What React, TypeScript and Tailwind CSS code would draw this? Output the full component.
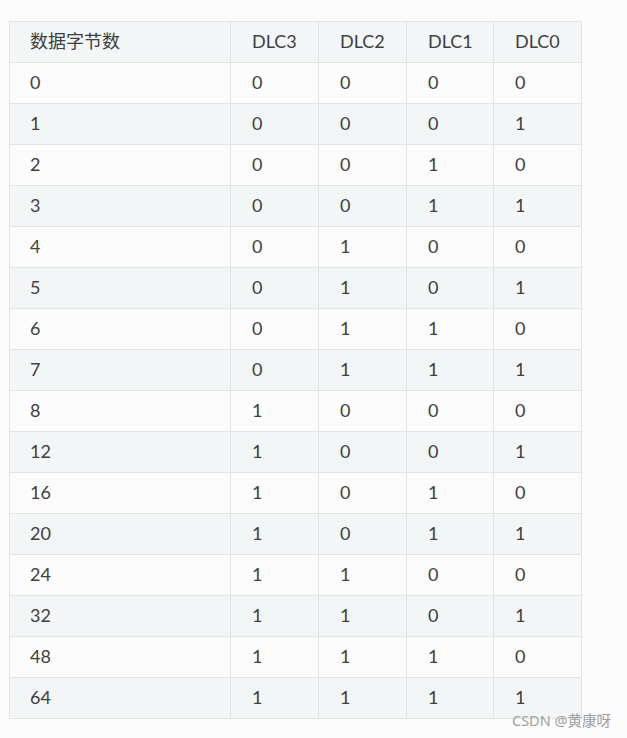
import React from "react";

const rows: [string, string, string, string, string][] = [
  ["0", "0", "0", "0", "0"],
  ["1", "0", "0", "0", "1"],
  ["2", "0", "0", "1", "0"],
  ["3", "0", "0", "1", "1"],
  ["4", "0", "1", "0", "0"],
  ["5", "0", "1", "0", "1"],
  ["6", "0", "1", "1", "0"],
  ["7", "0", "1", "1", "1"],
  ["8", "1", "0", "0", "0"],
  ["12", "1", "0", "0", "1"],
  ["16", "1", "0", "1", "0"],
  ["20", "1", "0", "1", "1"],
  ["24", "1", "1", "0", "0"],
  ["32", "1", "1", "0", "1"],
  ["48", "1", "1", "1", "0"],
  ["64", "1", "1", "1", "1"],
];

const widths = ["w-[221px]", "w-[88px]", "w-[88px]", "w-[87px]", "w-[88px]"];

export default function App() {
  return (
    <div className="relative w-[627px] h-[738px] bg-[#fcfcfc] pt-[21px] pl-[9px] font-['Lato','Noto_Sans_CJK_SC',sans-serif] text-[18px] leading-[24px] text-[#404040]">
      <table className="border-collapse table-fixed w-[573px]">
        <colgroup>
          {widths.map((w, i) => (
            <col key={i} className={w} />
          ))}
        </colgroup>
        <thead>
          <tr className="h-[41px] bg-[#f3f6f6]">
            {["数据字节数", "DLC3", "DLC2", "DLC1", "DLC0"].map((h, i) => (
              <th
                key={i}
                className={`border border-[#e1e4e5] text-left font-normal ${i === 0 ? "pl-[20px]" : "pl-[21px]"} pt-0 pb-[2px]`}
              >
                {h}
              </th>
            ))}
          </tr>
        </thead>
        <tbody>
          {rows.map((r, ri) => (
            <tr key={ri} className={`h-[41px] ${ri % 2 === 1 ? "bg-[#f3f6f6]" : "bg-[#fcfcfc]"}`}>
              {r.map((c, ci) => (
                <td
                  key={ci}
                  className={`border border-[#e1e4e5] ${ci === 0 ? "pl-[20px]" : "pl-[21px]"} pt-0 pb-[2px]`}
                >
                  {c}
                </td>
              ))}
            </tr>
          ))}
        </tbody>
      </table>
      <div className="absolute left-[512px] top-[710px] text-[14.5px] text-[#a0a0a0] font-['Noto_Sans','Noto_Sans_CJK_SC',sans-serif] leading-[20px]">
        CSDN @黄康呀
      </div>
    </div>
  );
}
